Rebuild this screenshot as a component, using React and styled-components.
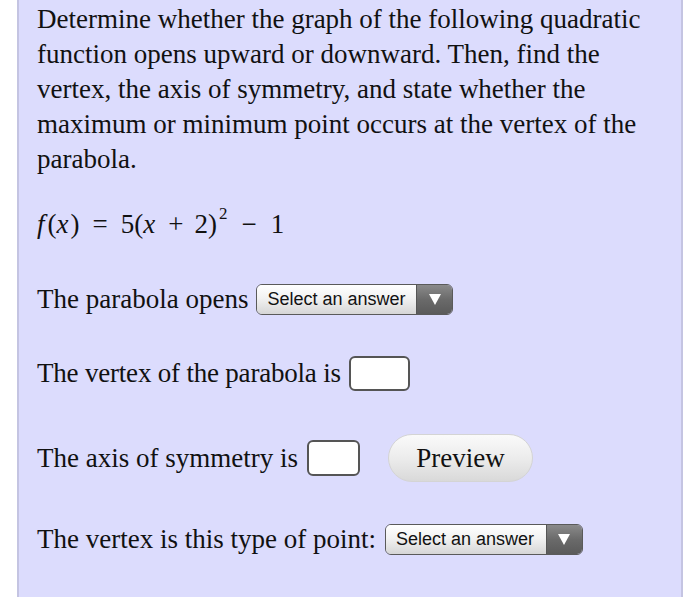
import React from "react";
import styled, { createGlobalStyle } from "styled-components";

const Global = createGlobalStyle`
  html, body { margin: 0; padding: 0; background: #fff; }
  body { width: 700px; height: 599px; overflow: hidden; }
`;

const Panel = styled.div`
  margin-left: 17px;
  width: 666px;
  height: 597px;
  box-sizing: border-box;
  background: #dcdcfd;
  border-left: 2px solid #c4c4e2;
  border-right: 2px solid #c4c4e2;
  padding: 2px 20px 0 18px;
  font-family: "Liberation Serif", "Times New Roman", serif;
  font-size: 27px;
  line-height: 35px;
  color: #111;
`;

const Question = styled.p`
  margin: 0;
`;

const Formula = styled.p`
  margin: 30px 0 0 0;
  font-family: "Liberation Serif", serif;
  font-size: 27px;
`;

const I = styled.i`
  font-family: "Liberation Serif", serif;
  margin-right: ${(p) => p.$r || 1}px;
`;

const Op = styled.span`
  margin: 0 ${(p) => p.$space || 8}px;
`;

const Sup = styled.sup`
  font-size: 17px;
  vertical-align: 14px;
  line-height: 0;
  margin-left: 2px;
`;

const Row = styled.div`
  display: flex;
  align-items: center;
  margin-top: ${(p) => p.$mt}px;
  height: ${(p) => p.$h || 35}px;
`;

const Label = styled.span`
  margin-right: ${(p) => p.$gap}px;
  white-space: nowrap;
  letter-spacing: ${(p) => p.$ls || 0}px;
`;

const Select = styled.div`
  display: flex;
  align-items: stretch;
  width: ${(p) => p.$w}px;
  height: 31px;
  box-sizing: border-box;
  border: 1px solid #5a5a5a;
  border-radius: 6px;
  overflow: hidden;
  font-family: "Liberation Sans", Arial, sans-serif;
  font-size: 18px;
  color: #111;
`;

const SelectText = styled.div`
  flex: 1;
  display: flex;
  align-items: center;
  padding-left: 10px;
  background: linear-gradient(#ffffff, #f2f2f2 45%, #d6d6d6);
  border-right: 1px solid #555;
`;

const SelectArrow = styled.div`
  width: 35px;
  display: flex;
  align-items: center;
  justify-content: center;
  background: linear-gradient(#8a8a8a, #6a6a6a 50%, #5a5a5a);
`;

const Input = styled.div`
  width: ${(p) => p.$w}px;
  height: ${(p) => p.$h}px;
  box-sizing: border-box;
  background: #fff;
  border: 2px solid #555;
  border-radius: 6px;
`;

const Preview = styled.div`
  margin-left: 28px;
  width: 145px;
  height: 48px;
  box-sizing: border-box;
  border-radius: 24px;
  border: 1px solid #d4d4d4;
  background: linear-gradient(#fafafa, #ececec 50%, #d9d9d9);
  display: flex;
  align-items: center;
  justify-content: center;
  font-family: "Liberation Serif", serif;
  font-size: 27px;
  color: #111;
`;

const Arrow = () => (
  <svg width="12" height="11" viewBox="0 0 12 11">
    <polygon points="0,0 12,0 6,11" fill="#fff" />
  </svg>
);

const Dropdown = ({ w }) => (
  <Select $w={w}>
    <SelectText>Select an answer</SelectText>
    <SelectArrow>
      <Arrow />
    </SelectArrow>
  </Select>
);

export default function App() {
  return (
    <>
      <Global />
      <Panel>
        <Question>
          Determine whether the graph of the following quadratic function opens
          upward or downward. Then, find the vertex, the axis of symmetry, and
          state whether the maximum or minimum point occurs at the vertex of the
          parabola.
        </Question>
        <Formula>
          <I $r={3}>f</I>(<I $r={2}>x</I>)<Op $space={13}>=</Op>5(<I $r={2}>x</I>
          <Op $space={11}>+</Op>2)<Sup>2</Sup>
          <Op $space={14}>−</Op>1
        </Formula>
        <Row $mt={40}>
          <Label $gap={8}>The parabola opens</Label>
          <Dropdown w={197} />
        </Row>
        <Row $mt={39}>
          <Label $gap={8} $ls={-0.2}>The vertex of the parabola is</Label>
          <Input $w={61} $h={35} />
        </Row>
        <Row $mt={43} $h={48}>
          <Label $gap={9}>The axis of symmetry is</Label>
          <Input $w={53} $h={36} />
          <Preview>Preview</Preview>
        </Row>
        <Row $mt={40}>
          <Label $gap={9}>The vertex is this type of point:</Label>
          <Dropdown w={198} />
        </Row>
      </Panel>
    </>
  );
}
